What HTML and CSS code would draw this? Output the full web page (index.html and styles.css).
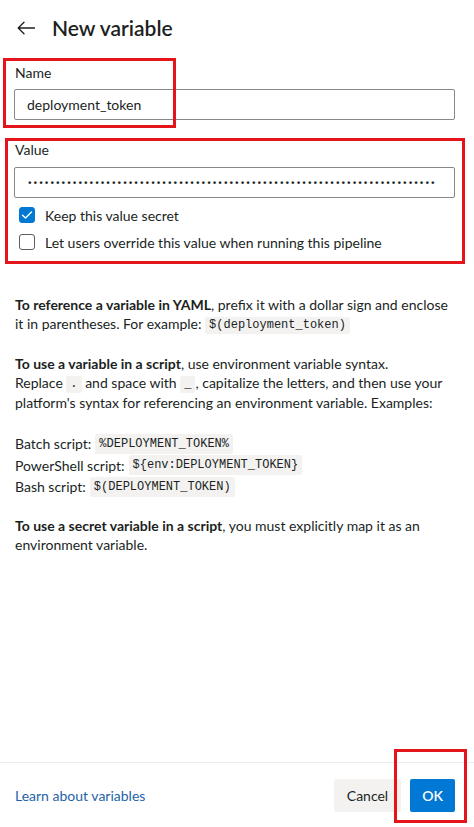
FILE: index.html
```html
<!DOCTYPE html>
<html lang="en">
<head>
<meta charset="utf-8">
<title>New variable</title>
<link rel="stylesheet" href="styles.css">
</head>
<body>
<div class="page">
  <main class="content">
    <header class="header">
      <svg class="back" width="18" height="14" viewBox="0 0 18 14" aria-hidden="true">
        <path d="M17.5 7H1.2M7 1.2L1.2 7L7 12.8" fill="none" stroke="#201f1e" stroke-width="1.3" stroke-linecap="round" stroke-linejoin="round"/>
      </svg>
      <h1 class="title">New variable</h1>
    </header>

    <div class="field field-name">
      <label class="label">Name</label>
      <div class="input">deployment_token</div>
    </div>

    <div class="field field-value">
      <label class="label">Value</label>
      <div class="input dots">•••••••••••••••••••••••••••••••••••••••••••••••••••••••••••••••••••••••••</div>
      <div class="check-row first">
        <span class="box checked">
          <svg width="12" height="10" viewBox="0 0 12 10" aria-hidden="true"><path d="M1.5 5.2L4.5 8L10.5 2" fill="none" stroke="#fff" stroke-width="1.4" stroke-linecap="round" stroke-linejoin="round"/></svg>
        </span>
        <span class="check-text">Keep this value secret</span>
      </div>
      <div class="check-row">
        <span class="box"></span>
        <span class="check-text">Let users override this value when running this pipeline</span>
      </div>
    </div>

    <p class="para p1"><b>To reference a variable in YAML</b>, prefix it with a dollar sign and enclose it in parentheses. For example: <code>$(deployment_token)</code></p>

    <p class="para p2"><b>To use a variable in a script</b>, use environment variable syntax.<br>Replace <code>.</code> and space with <code>_</code>, capitalize the letters, and then use your<br>platform's syntax for referencing an environment variable. Examples:</p>

    <div class="examples">
      <div class="ex"><span>Batch script:</span><code>%DEPLOYMENT_TOKEN%</code></div>
      <div class="ex"><span>PowerShell script:</span><code>${env:DEPLOYMENT_TOKEN}</code></div>
      <div class="ex"><span>Bash script:</span><code>$(DEPLOYMENT_TOKEN)</code></div>
    </div>

    <p class="para p4"><b>To use a secret variable in a script</b>, you must explicitly map it as an environment variable.</p>
  </main>

  <footer class="footer">
    <a class="link" href="#">Learn about variables</a>
    <div class="buttons">
      <button class="btn cancel">Cancel</button>
      <button class="btn ok">OK</button>
    </div>
  </footer>

  <div class="mark mark-name"></div>
  <div class="mark mark-value"></div>
  <div class="mark mark-ok"></div>
</div>
</body>
</html>
```

FILE: styles.css
```css
* { box-sizing: border-box; }
html, body { margin: 0; padding: 0; background: #fff; }
body {
  font-family: Lato, "Open Sans", "Noto Sans", sans-serif;
  font-size: 14px;
  color: #201f1e;
}
.page {
  position: relative;
  min-height: 827px;
  display: flex;
  flex-direction: column;
}
.content {
  flex: 1;
  padding: 0 19px 0 14px;
}
.header {
  height: 56px;
  display: flex;
  align-items: center;
  padding-left: 3px;
  gap: 17px;
}
.back { display: block; }
.title {
  margin: 0;
  font-size: 21px;
  font-weight: 600;
  line-height: 28px;
}
.field-name { margin-top: 7px; }
.label {
  display: block;
  line-height: 20px;
  padding-left: 1px;
}
.input {
  margin-top: 6px;
  height: 31px;
  border: 1px solid #8a8886;
  border-radius: 2px;
  padding: 0 12px;
  display: flex;
  align-items: center;
  white-space: nowrap;
  overflow: hidden;
}
.field-value { margin-top: 20px; }
.field-value .input { margin-top: 7px; }
.dots {
  font-family: "Liberation Mono", monospace;
  font-size: 9.33px;
  font-weight: 700;
  padding-top: 1px;
}
.check-row {
  display: flex;
  align-items: center;
  height: 20px;
  margin-top: 7px;
  padding-left: 5px;
  gap: 10px;
}
.box {
  width: 16px;
  height: 16px;
  border: 1px solid #605e5c;
  border-radius: 3px;
  display: flex;
  align-items: center;
  justify-content: center;
  flex: none;
}
.box.checked {
  background: #0078d4;
  border-color: #0078d4;
}
.para {
  margin: 0;
  line-height: 19px;
  padding-left: 1px;
}
.p1 { margin-top: 43px; }
.p2 { margin-top: 20px; }
.p4 { margin-top: 18px; }
b { font-weight: 700; }
code {
  display: inline-block;
  font-family: "Liberation Mono", "DejaVu Sans Mono", monospace;
  font-size: 12px;
  line-height: 17px;
  vertical-align: 1px;
  background: #f3f2f1;
  padding: 0 4px;
  border-radius: 2px;
}
.examples {
  margin-top: 21px;
  padding-left: 1px;
  display: flex;
  flex-direction: column;
}
.ex {
  display: flex;
  align-items: center;
  height: 21.5px;
  gap: 4px;
}
.ex code {
  line-height: 20px;
  vertical-align: 0;
}
.footer {
  height: 65px;
  border-top: 1px solid #edebe9;
  display: flex;
  align-items: center;
  justify-content: space-between;
  padding: 0 19px 0 15px;
}
.link {
  color: #1f63a8;
  text-decoration: none;
}
.buttons {
  display: flex;
  gap: 9px;
}
.btn {
  font-family: inherit;
  font-size: 14px;
  border: none;
  border-radius: 2px;
  height: 33px;
  padding: 0;
  font-weight: 600;
}
.cancel {
  width: 67px;
  background: #f3f2f1;
  color: #201f1e;
  font-weight: 400;
}
.ok {
  width: 45px;
  background: #0078d4;
  color: #fff;
}
.mark {
  position: absolute;
  border: 3px solid #e3151a;
  pointer-events: none;
}
.mark-name { left: 3px; top: 58px; width: 173px; height: 70px; }
.mark-value { left: 5px; top: 138px; width: 460px; height: 126px; }
.mark-ok { left: 394px; top: 749px; width: 73px; height: 74px; }
```
